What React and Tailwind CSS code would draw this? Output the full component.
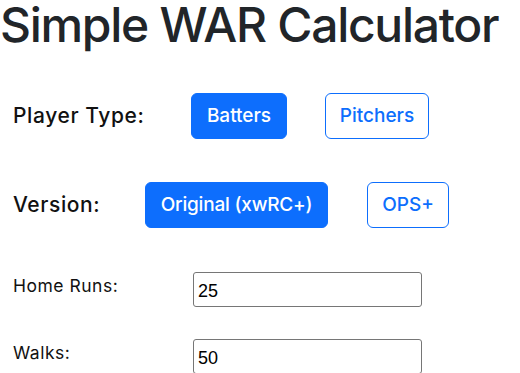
export default function App() {
  return (
    <div className="w-[520px] h-[373px] overflow-hidden bg-white text-[#212529]" style={{ fontFamily: "Inter, 'Liberation Sans', sans-serif" }}>
      <h1 className="text-[48px] leading-[50px] font-medium tracking-[-1.3px] whitespace-nowrap">Simple WAR Calculator</h1>
      <div className="pl-[13px]">
        <div className="flex items-center mt-[43px] h-[46px]">
          <div className="w-[178px] text-[21px] font-medium tracking-[0.6px] text-[#111]">Player Type:</div>
          <button className="h-[46px] w-[96px] rounded-[6px] bg-[#0d6efd] text-white text-[19px] font-medium border border-[#0d6efd]">Batters</button>
          <button className="h-[46px] w-[104px] rounded-[6px] ml-[38px] bg-white text-[#0d6efd] text-[19px] font-medium border border-[#0d6efd]">Pitchers</button>
        </div>
        <div className="flex items-center mt-[43px] h-[46px]">
          <div className="w-[132px] text-[21px] font-medium tracking-[0.6px] text-[#111]">Version:</div>
          <button className="h-[46px] w-[183px] rounded-[6px] bg-[#0d6efd] text-white text-[19px] font-medium tracking-[-0.2px] border border-[#0d6efd]">Original (xwRC+)</button>
          <button className="h-[46px] w-[82px] rounded-[6px] ml-[39px] bg-white text-[#0d6efd] text-[19px] font-medium border border-[#0d6efd]">OPS+</button>
        </div>
        <div className="flex items-start mt-[44px]">
          <div className="w-[180px] text-[17.5px] leading-[22px] tracking-[0.5px] text-[#111] mt-[3px]">Home Runs:</div>
          <input readOnly value="25" style={{ fontFamily: "'Liberation Sans', Arial, sans-serif" }} className="w-[229px] h-[35px] border border-[#767676] rounded-[3px] px-[4px] pt-[3px] text-[18px] text-black outline-none" />
        </div>
        <div className="flex items-start mt-[32px]">
          <div className="w-[180px] text-[17.5px] leading-[22px] tracking-[0.5px] text-[#111] mt-[3px]">Walks:</div>
          <input readOnly value="50" style={{ fontFamily: "'Liberation Sans', Arial, sans-serif" }} className="w-[229px] h-[35px] border border-[#767676] rounded-[3px] px-[4px] pt-[3px] text-[18px] text-black outline-none" />
        </div>
      </div>
    </div>
  );
}
